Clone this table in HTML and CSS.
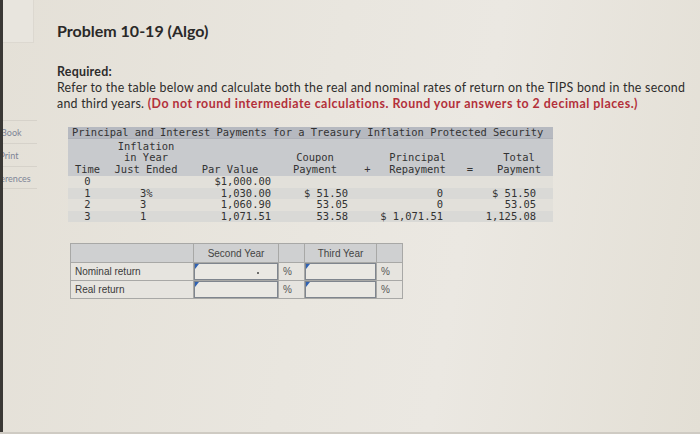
FILE: index.html
```html
<!DOCTYPE html>
<html>
<head>
<meta charset="utf-8">
<link rel="stylesheet" href="styles.css">
</head>
<body>
<div class="screen">
  <div class="bezel"></div>
  <div class="side">
    <div class="side-top"></div>
    <div class="side-btns">
      <div class="side-btn">eBook</div>
      <div class="side-btn">Print</div>
      <div class="side-btn">References</div>
    </div>
  </div>
  <main class="main">
    <h1 class="title">Problem 10-19 (Algo)</h1>
    <p class="req"><b>Required:</b><br>Refer to the table below and calculate both the real and nominal rates of return on the TIPS bond in the second and third years. <span class="red">(Do not round intermediate calculations. Round your answers to 2 decimal places.)</span></p>

    <table class="tips">
      <colgroup>
        <col class="c-time"><col class="c-infl"><col class="c-par"><col class="c-coup"><col class="c-op"><col class="c-prin"><col class="c-op2"><col class="c-tot">
      </colgroup>
      <thead>
        <tr class="bar"><th colspan="8">Principal and Interest Payments for a Treasury Inflation Protected Security</th></tr>
        <tr class="colh">
          <th class="ctr">Time</th>
          <th class="ctr">Inflation<br>in Year<br>Just Ended</th>
          <th class="ctr">Par Value</th>
          <th class="ctr">Coupon<br>Payment</th>
          <th class="ctr">+</th>
          <th class="ctr">Principal<br>Repayment</th>
          <th class="ctr">=</th>
          <th class="ctr">Total<br>Payment</th>
        </tr>
      </thead>
      <tbody>
        <tr class="r0"><td class="ctr">0</td><td class="infl"></td><td class="rt p-par">$1,000.00</td><td></td><td></td><td></td><td></td><td></td></tr>
        <tr class="r1"><td class="ctr">1</td><td class="infl">3%</td><td class="rt p-par">1,030.00</td><td class="rt p-coup">$ 51.50</td><td></td><td class="rt p-prin">0</td><td></td><td class="rt p-tot">$ 51.50</td></tr>
        <tr class="r0"><td class="ctr">2</td><td class="infl">3</td><td class="rt p-par">1,060.90</td><td class="rt p-coup">53.05</td><td></td><td class="rt p-prin">0</td><td></td><td class="rt p-tot">53.05</td></tr>
        <tr class="r1"><td class="ctr">3</td><td class="infl">1</td><td class="rt p-par">1,071.51</td><td class="rt p-coup">53.58</td><td></td><td class="rt p-prin">$ 1,071.51</td><td></td><td class="rt p-tot">1,125.08</td></tr>
      </tbody>
    </table>

    <table class="ans">
      <colgroup>
        <col class="a-lab"><col class="a-in1"><col class="a-pct"><col class="a-in2"><col class="a-pct">
      </colgroup>
      <tr class="ah"><th></th><th>Second Year</th><th></th><th>Third Year</th><th></th></tr>
      <tr><td class="lab">Nominal return</td><td class="inp"><div class="box"><span class="tri"></span><span class="dot"></span></div></td><td class="pct">%</td><td class="inp"><div class="box"><span class="tri"></span></div></td><td class="pct">%</td></tr>
      <tr><td class="lab">Real return</td><td class="inp"><div class="box"><span class="tri"></span></div></td><td class="pct">%</td><td class="inp"><div class="box"><span class="tri"></span></div></td><td class="pct">%</td></tr>
    </table>
  </main>
</div>
</body>
</html>
```
FILE: styles.css
```css
html, body {
  margin: 0;
  padding: 0;
}
body {
  width: 700px;
  height: 434px;
  overflow: hidden;
  background: linear-gradient(100deg, #e4e0d7 0%, #e9e6df 45%, #ebe8e2 65%, #e3dfd5 100%);
  font-family: Lato, "Liberation Sans", sans-serif;
  color: #2b2a29;
}
.screen {
  display: flex;
  height: 434px;
  border-bottom: 2px solid #cfcbc3;
  box-sizing: border-box;
}
.bezel {
  width: 3px;
  background: #3a3835;
  flex: none;
}
.side {
  width: 34px;
  flex: none;
  overflow: hidden;
}
.side-top {
  height: 42px;
  width: 30px;
  border-right: 1px solid #dcd8d0;
  border-bottom: 1px solid #dcd8d0;
  background: #e8e5de;
}
.side-btns {
  margin-top: 77px;
  border-right: 2px solid #d9d5cd;
  margin-left: -34px;
  width: 68px;
}
.side-btn {
  height: 23px;
  line-height: 23px;
  font-size: 9px;
  color: #7d8496;
  text-align: center;
  white-space: nowrap;
  border-top: 1px solid #d6d2ca;
  padding-left: 12px;
  box-sizing: border-box;
}
.side-btn:last-child {
  border-bottom: 1px solid #d6d2ca;
}
.main {
  padding-left: 20px;
  flex: 1;
}
.title {
  margin: 21px 0 0 0;
  font-size: 16px;
  font-weight: 700;
  line-height: 19px;
  color: #2a2928;
}
.req {
  margin: 24px 0 0 0;
  font-size: 12.4px;
  line-height: 16px;
  letter-spacing: 0.25px;
  color: #2d2c2b;
}
.req b {
  font-weight: 700;
}
.red {
  color: #b3303a;
  font-weight: 700;
  letter-spacing: 0.5px;
}
.tips {
  margin: 15px 0 0 11px;
  border-collapse: collapse;
  table-layout: fixed;
  width: 485px;
  font-family: "DejaVu Sans Mono", "Liberation Mono", monospace;
  font-size: 10.45px;
  line-height: 11.5px;
  color: #333;
}
.tips th, .tips td {
  padding: 0;
  font-weight: normal;
  white-space: nowrap;
}
.c-time { width: 39px; }
.c-infl { width: 78px; }
.c-par { width: 90px; }
.c-coup { width: 80px; }
.c-op { width: 25px; }
.c-prin { width: 75px; }
.c-op2 { width: 30px; }
.c-tot { width: 68px; }
.tips .bar th {
  background: #b6b9c0;
  text-align: left;
  padding-left: 4px;
  height: 11px;
  line-height: 11px;
  border-bottom: 1px solid #aeb1b8;
}
.tips .colh th {
  background: #c8cacd;
  vertical-align: bottom;
  height: 36px;
  padding-bottom: 1px;
}
.ctr { text-align: center; }
.rt { text-align: right; }
.infl { text-align: left; padding-left: 33px !important; }
.p-par { padding-right: 4px !important; }
.p-coup { padding-right: 7px !important; }
.p-prin { padding-right: 12px !important; }
.p-tot { padding-right: 17px !important; }
.tips .r0 td { background: #e2e0da; }
.tips .r1 td { background: #d9d9d6; }
.tips tbody td { height: 11.5px; }

.ans {
  margin: 21px 0 0 13px;
  border-collapse: collapse;
  table-layout: fixed;
  width: 332px;
  font-family: "Liberation Sans", Arial, sans-serif;
  font-size: 10px;
  color: #3a3a3a;
}
.a-lab { width: 123px; }
.a-in1 { width: 85px; }
.a-pct { width: 26px; }
.a-in2 { width: 72px; }
.ans th, .ans td {
  border: 1px solid #a8a8a6;
  padding: 0;
}
.ans .ah th {
  background: #cfd0d1;
  font-weight: normal;
  height: 18px;
  text-align: center;
  color: #444;
}
.ans td {
  height: 17px;
  background: #e6e4df;
}
.ans .lab {
  padding-left: 4px;
}
.ans .pct {
  padding-left: 4px;
  color: #555;
}
.ans .inp {
  padding: 0;
}
.box {
  position: relative;
  height: 15px;
  margin: 0;
  border: 1px solid #7f858e;
  background: #eae8e3;
}
.tri {
  position: absolute;
  left: 0;
  top: 0;
  width: 0;
  height: 0;
  border-top: 5px solid #2f62b3;
  border-right: 4px solid transparent;
}
.dot {
  position: absolute;
  right: 18px;
  top: 8px;
  width: 2px;
  height: 2px;
  border-radius: 1px;
  background: #444;
}
```
